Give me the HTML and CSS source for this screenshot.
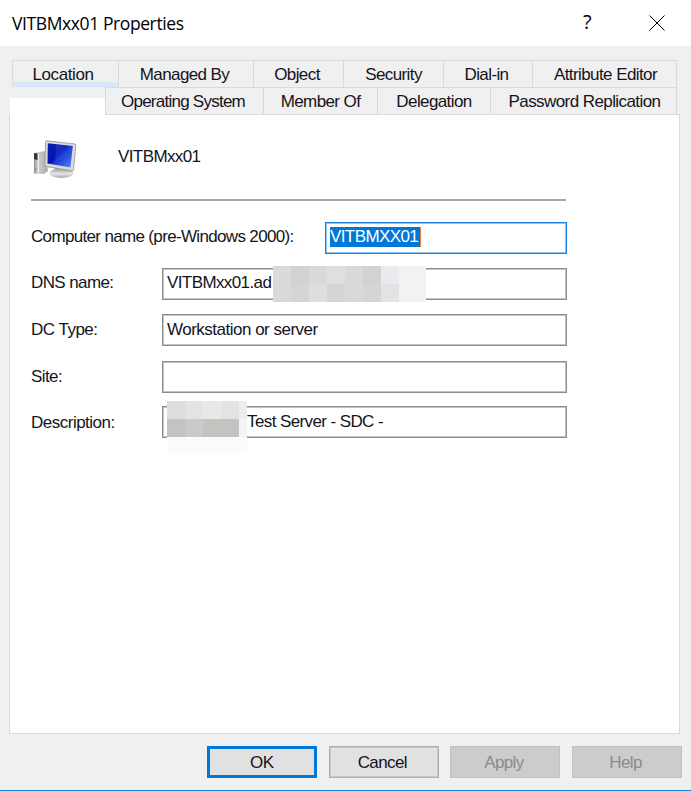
FILE: index.html
```html
<!DOCTYPE html>
<html lang="en">
<head>
<meta charset="utf-8">
<title>VITBMxx01 Properties</title>
<link rel="stylesheet" href="styles.css">
</head>
<body>
<div class="dialog">
  <header class="titlebar">
    <h1 class="title">VITBMxx01 Properties</h1>
    <span class="help-mark">?</span>
    <svg class="close" viewBox="0 0 16 16"><path d="M.5 .5 15.5 15.5M15.5 .5 .5 15.5"/></svg>
  </header>
  <main class="content">
    <nav class="tabs">
      <div class="row row-one">
        <div class="tab hot">Location</div>
        <div class="tab t-left">Managed By</div>
        <div class="tab t-left">Object</div>
        <div class="tab">Security</div>
        <div class="tab t-left">Dial-in</div>
        <div class="tab t-right">Attribute Editor</div>
      </div>
      <div class="row row-two">
        <div class="tab-active"></div>
        <div class="tab t-os">Operating System</div>
        <div class="tab">Member Of</div>
        <div class="tab">Delegation</div>
        <div class="tab t-right">Password Replication</div>
      </div>
    </nav>
    <section class="panel">
      <div class="identity">
        <svg class="computer" viewBox="0 0 44 40">
          <defs>
            <linearGradient id="screen" x1="0" y1="0" x2="1" y2="1"><stop offset="0" stop-color="#0a1fb0"/><stop offset=".45" stop-color="#0414b4"/><stop offset=".55" stop-color="#1838d8"/><stop offset="1" stop-color="#5f8cf4"/></linearGradient>
            <linearGradient id="tower" x1="0" y1="0" x2="1" y2="0"><stop offset="0" stop-color="#8c8c8c"/><stop offset=".25" stop-color="#d0d0d0"/><stop offset="1" stop-color="#a8a8a8"/></linearGradient>
            <linearGradient id="stand" x1="0" y1="0" x2="0" y2="1"><stop offset="0" stop-color="#999"/><stop offset=".55" stop-color="#e6e6e6"/><stop offset="1" stop-color="#a6a6a6"/></linearGradient>
          </defs>
          <path d="M0 13 11 11 14 31 10 34 0 33.500Z" fill="url(#tower)"/>
          <path d="M0 13 3.500 13.500V20L0 19Z" fill="#333"/>
          <path d="M4.500 14V33" stroke="#eee" stroke-width="1"/>
          <circle cx="2" cy="29" r=".7" fill="#3c9c3c"/>
          <path d="M20 27H35L34 34Q28 36 21 34Z" fill="#b0b0b0"/>
          <ellipse cx="27.500" cy="33.300" rx="12" ry="4.700" fill="url(#stand)"/>
          <path d="M12.500 .8 41 4Q42 4.300 41.800 5.500L39.500 29.500Q39.200 31 38 30.800L12 26.500Q11 26 11 25L11.500 2Q11.600 .8 12.500 .8Z" fill="#dcdcdc" stroke="#929292" stroke-width=".8"/>
          <path d="M13.800 3.200 38.700 6 36.500 27.500 13.500 23.500Z" fill="url(#screen)"/>
          <path d="M22 4.200 38.700 6 37.800 15Q28 16 21 23Z" fill="#416cf0" opacity=".25"/>
        </svg>
        <span class="name">VITBMxx01</span>
      </div>
      <hr class="rule">
      <div class="form">
        <div class="line">
          <label class="tight">Computer name (pre-Windows 2000):</label>
          <div class="field focus"><span class="selected">VITBMXX01</span></div>
        </div>
        <div class="line">
          <label>DNS name:</label>
          <div class="field wide">VITBMxx01.ad
            <div class="mosaic mosaic-dns">
              <i class="c0"></i><i class="c2"></i><i class="c3"></i><i class="c4"></i><i class="c3"></i><i class="c5"></i><i class="c6"></i><i class="c7"></i>
              <i class="c3"></i><i class="c8"></i><i class="c1"></i><i class="c8"></i><i class="c3"></i><i class="c8"></i><i class="c9"></i><i class="c7"></i>
            </div>
          </div>
        </div>
        <div class="line">
          <label class="loose low">DC Type:</label>
          <div class="field wide loose low">Workstation or server</div>
        </div>
        <div class="line site">
          <label class="low">Site:</label>
          <div class="field wide"></div>
        </div>
        <div class="line">
          <label class="loose lower">Description:</label>
          <div class="field wide desc low">Test Server - SDC -
            <div class="mosaic mosaic-desc">
              <i class="c1"></i><i class="c9"></i><i class="c10"></i><i class="c9"></i><i class="c11"></i>
              <i class="c12"></i><i class="c13"></i><i class="c14"></i><i class="c12"></i><i class="c15"></i>
              <i class="c16"></i><i class="c16"></i><i class="c16"></i><i class="c16"></i><i class="c16"></i>
            </div>
          </div>
        </div>
      </div>
    </section>
    <footer class="actions">
      <button class="btn default">OK</button>
      <button class="btn">Cancel</button>
      <button class="btn" disabled>Apply</button>
      <button class="btn" disabled>Help</button>
    </footer>
  </main>
</div>
</body>
</html>
```
FILE: styles.css
```css
* { box-sizing: border-box; }
body { margin: 0; background: #f0f0f0; color: #14141c; font: 17px/20px "Liberation Sans", Arial, sans-serif; letter-spacing: -.6px; white-space: nowrap; }
.dialog { width: 691px; height: 791px; display: flex; flex-direction: column; background: #f0f0f0; border-bottom: 1px solid #1080d8; overflow: hidden; }
.titlebar { height: 46px; background: #fff; display: flex; align-items: center; padding: 0 26px 0 12px; color: #000; }
.title { margin: 0; flex: 1; font: 400 17.5px/24px "Open Sans", sans-serif; letter-spacing: -.4px; }
.help-mark { font: 400 20px/24px "Open Sans", sans-serif; margin: -2px 58px 0 0; }
.close { width: 16px; height: 16px; margin-top: -1px; stroke: #000; stroke-width: 1; fill: none; }
.content { padding: 14px 11px 0 9px; }
.tabs { padding: 0 3px; height: 54px; }
.row { display: grid; height: 27px; }
.row-one { grid-template-columns: 106px 135px 90px 100px 89px 145px; }
.row-two { grid-template-columns: 93px 158px 114px 113px 187px; }
.tab { border: 1px solid #dadada; border-width: 1px 0 0 1px; display: flex; justify-content: center; padding-top: 4px; }
.tab:last-child { border-right-width: 1px; }
.hot { box-shadow: inset 0 -5px #d9e8f8; letter-spacing: -.4px; padding-right: 5px; }
.t-left { padding-right: 3px; }
.t-right { padding-left: 2px; letter-spacing: -.58px; }
.t-os { letter-spacing: -.75px; padding-right: 3px; }
.tab-active { background: #fff; margin: 11px 0 -1px -2px; z-index: 1; }
.panel { height: 620px; background: #fff; border: 1px solid #dadada; padding: 25px 0 0 21px; }
.identity { display: flex; height: 59px; }
.computer { width: 44px; height: 40px; margin-left: 3px; }
.name { margin: 7px 0 0 40px; }
.rule { width: 535px; height: 2px; margin: 0 0 21px; border: 0; background: #a8a8a8; }
.form { width: 536px; display: grid; row-gap: 14px; }
.line { display: flex; justify-content: space-between; height: 32px; }
.line label { padding-top: 5px; }
.line label.low { padding-top: 6px; }
.line label.lower { padding-top: 7px; }
.site { position: relative; top: 1px; }
.tight { letter-spacing: -.66px; }
.loose { letter-spacing: -.5px; }
.field { position: relative; height: 32px; border: 1px solid #8c8c8c; box-shadow: inset 0 0 0 1px #c4c4c4; background: #fff; padding: 4px; }
.field.low { padding-top: 5px; }
.wide { width: 405px; }
.focus { width: 242px; border-color: #1681dd; box-shadow: inset 0 0 0 1px #8cc4f2; }
.selected { display: block; width: 91px; height: 20px; background: #0078d7; color: #fff; border-right: 1px solid #e88040; }
.field.desc { padding-left: 84px; }
.mosaic { position: absolute; display: grid; grid-auto-rows: 18px; }
.mosaic-dns { left: 110px; top: -3px; grid-template-columns: repeat(7, 18px) 27px; }
.mosaic-desc { left: 4px; top: -6px; grid-template-columns: repeat(4, 18px) 8px; grid-template-rows: 18px 18px 17px; }
.c0 { background: #dcdad8; } .c1 { background: #dedede; } .c2 { background: #d2d2d2; } .c3 { background: #d9d9db; } .c4 { background: #dfdfdf; }
.c5 { background: #d4d2d0; } .c6 { background: #e9ebee; } .c7 { background: #f2f2f2; } .c8 { background: #d5d5d5; }
.c9 { background: #e3e3e3; } .c10 { background: #e8e8e8; } .c11 { background: #ededed; } .c12 { background: #c3c2c4; }
.c13 { background: #cacaca; } .c14 { background: #c4c3c0; } .c15 { background: #f4f4f6; } .c16 { background: #fbfbfb; }
.actions { display: flex; justify-content: flex-end; gap: 11.6px; padding-top: 12px; margin-right: -2px; }
.btn { width: 110px; height: 32px; padding: 2px 3px 0 0; border: 1px solid #adadad; box-shadow: inset 0 0 0 1px #c8c8c8; background: #e1e1e1; color: inherit; font: inherit; letter-spacing: inherit; }
.default { border: 3px solid #0078d7; box-shadow: none; padding-right: 1px; }
.btn:disabled { background: #ccc; border: 1px solid #c0c0c0; box-shadow: none; color: #8b8b8b; }
```
